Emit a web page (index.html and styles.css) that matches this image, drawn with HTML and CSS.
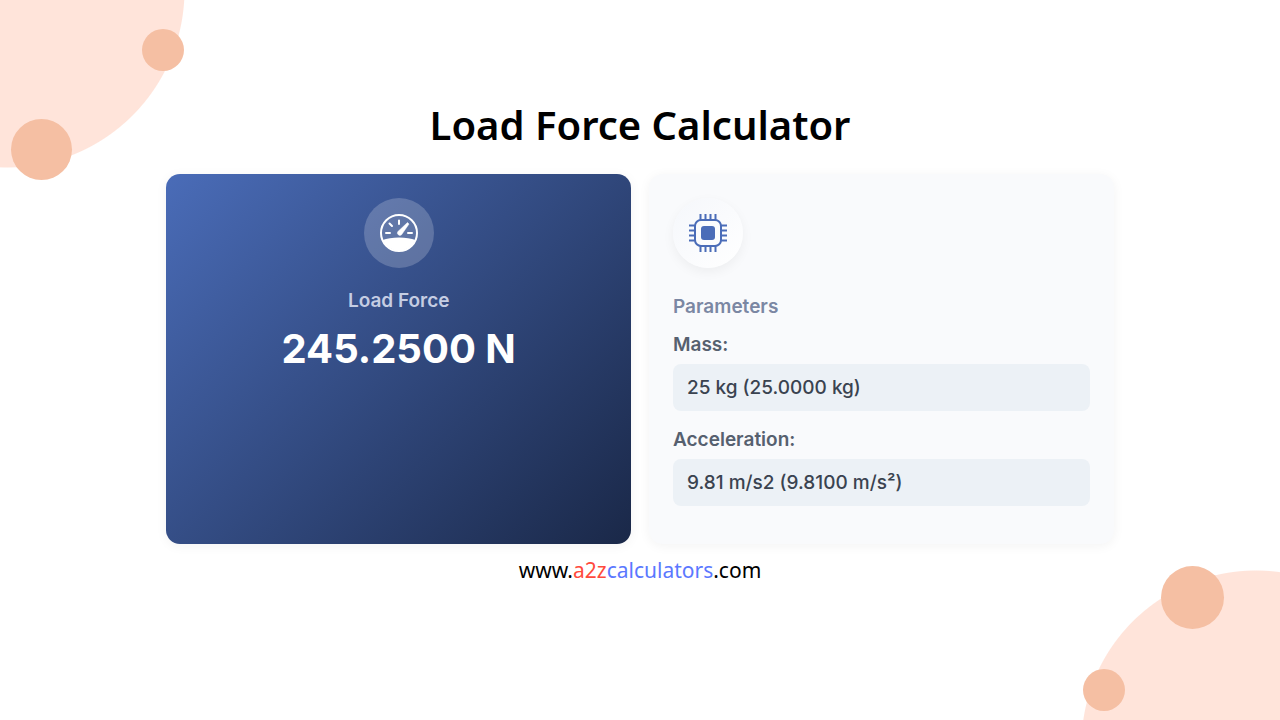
FILE: index.html
```html
<!DOCTYPE html>
<html lang="en">

<head>
    <meta charset="UTF-8">
    <meta name="viewport" content="width=device-width, initial-scale=1.0">
    <title>Load Force Calculator</title>
    <link rel="stylesheet" href="styles.css">
</head>

<body>
    <div class="circle top-small"></div>
    <div class="circle top-medium"></div>
    <div class="circle bottom-medium"></div>
    <div class="circle bottom-small"></div>

    <main class="container">
        <h1>Load Force Calculator</h1>
        <div class="cards">
            <section class="card result">
                <div class="icon">
                    <svg viewBox="0 0 40 40" width="40" height="40">
                        <circle cx="20" cy="20" r="18" fill="none" stroke="#fff" stroke-width="2" />
                        <path d="M3.500 27 Q10 24.500 20 24.500 Q30 24.500 36.500 27 A18 18 0 0 1 3.500 27 Z" fill="#fff" />
                        <path d="M20 7.500 V11 M10.500 10.500 L13 13 M7 20 H11 M29 20 H33" stroke="#fff" stroke-width="2" stroke-linecap="round" />
                        <path d="M28.500 9.500 L30 11 L22.500 21.800 A2.500 2.500 0 0 1 18.700 18.700 Z" fill="#fff" stroke="#fff" stroke-width="0.500" stroke-linejoin="round" />
                    </svg>
                </div>
                <h2>Load Force</h2>
                <p class="value">245.2500 N</p>
            </section>
            <section class="card params">
                <div class="icon">
                    <svg viewBox="0 0 40 40" width="40" height="40" fill="none" stroke="#4a6cb8" stroke-width="2">
                        <rect x="7" y="7" width="26" height="26" rx="6" />
                        <rect x="13" y="13" width="14" height="14" rx="3" fill="#4a6cb8" stroke="none" />
                        <path d="M12.500 1 V7 M17.500 1 V7 M22.500 1 V7 M27.500 1 V7 M12.500 33 V39 M17.500 33 V39 M22.500 33 V39 M27.500 33 V39" />
                        <path d="M1 12.500 H7 M1 17.500 H7 M1 22.500 H7 M1 27.500 H7 M33 12.500 H39 M33 17.500 H39 M33 22.500 H39 M33 27.500 H39" />
                    </svg>
                </div>
                <h2>Parameters</h2>
                <dl>
                    <dt>Mass:</dt>
                    <dd>25 kg (25.0000 kg)</dd>
                    <dt>Acceleration:</dt>
                    <dd>9.81 m/s2 (9.8100 m/s²)</dd>
                </dl>
            </section>
        </div>
        <a class="site" href="#">www.<span class="red">a2z</span><span class="blue">calculators</span>.com</a>
    </main>
</body>

</html>
```

FILE: styles.css
```css
* {
    margin: 0;
    padding: 0;
    box-sizing: border-box;
}

/* the two big corner circles are part of the page background */
body {
    position: relative;
    min-height: 100vh;
    background-color: #fff;
    background-image:
        radial-gradient(circle at 7px -10px, #ffe4da 177px, transparent 178px),
        radial-gradient(circle at calc(100% - 24px) calc(100% + 25px), #ffe4da 174px, transparent 175px);
    font-family: 'Inter', sans-serif;
}

.container {
    position: relative;
    width: 74%;
    margin: 0 auto;
    padding-top: 97px;
    text-align: center;
}

h1 {
    font-family: 'Noto Sans', sans-serif;
    font-size: 40px;
    font-weight: 600;
    line-height: 56px;
    color: #000;
    margin-bottom: 21px;
}

.cards {
    display: grid;
    grid-template-columns: 1fr 1fr;
    gap: 18px;
}

.card {
    padding: 24px 24px 38px;
    border-radius: 14px;
    box-shadow: 0 2px 12px rgba(0, 0, 0, 0.05);
}

.icon {
    display: flex;
    align-items: center;
    justify-content: center;
    width: 70px;
    height: 70px;
    border-radius: 50%;
}

h2 {
    font-size: 19px;
    font-weight: 600;
    line-height: 24px;
}

.result {
    background: linear-gradient(135deg, #4a6cb8, #1a2848);
    color: #fff;
}

.result .icon {
    margin: 0 auto 21px;
    background-color: rgba(255, 255, 255, 0.2);
}

.result h2 {
    color: #c5cde3;
    margin-bottom: 12px;
}

.value {
    font-size: 40px;
    font-weight: 700;
    line-height: 48px;
}

.params {
    background-color: #f9fafc;
    text-align: left;
}

.params .icon {
    margin-bottom: 27px;
    background: linear-gradient(135deg, #f5f7fb, #fff);
    box-shadow: 0 4px 12px rgba(0, 0, 0, 0.05);
}

.params h2 {
    color: #7b87a3;
    margin-bottom: 13px;
}

dt {
    font-size: 19px;
    font-weight: 600;
    line-height: 25px;
    color: #56606f;
    margin-bottom: 7px;
}

dd {
    padding: 11px 14px;
    border-radius: 8px;
    background-color: #ecf1f6;
    font-size: 19px;
    font-weight: 500;
    line-height: 25px;
    color: #3a4350;
}

dd + dt {
    margin-top: 16px;
}

.site {
    display: inline-block;
    margin-top: 10px;
    font-family: 'Noto Sans', sans-serif;
    font-size: 21px;
    line-height: 32px;
    color: #000;
    text-decoration: none;
}

.red {
    color: #ff4a3d;
}

.blue {
    color: #5b78ff;
}

/* small circles over the corners */
.circle {
    position: absolute;
    border-radius: 50%;
    background-color: #f5bfa3;
}

.top-small {
    top: 29px;
    left: 142px;
    width: 42px;
    height: 42px;
}

.top-medium {
    top: 119px;
    left: 11px;
    width: 61px;
    height: 61px;
}

.bottom-medium {
    right: 56px;
    bottom: 91px;
    width: 63px;
    height: 63px;
}

.bottom-small {
    right: 155px;
    bottom: 9px;
    width: 42px;
    height: 42px;
}
```
